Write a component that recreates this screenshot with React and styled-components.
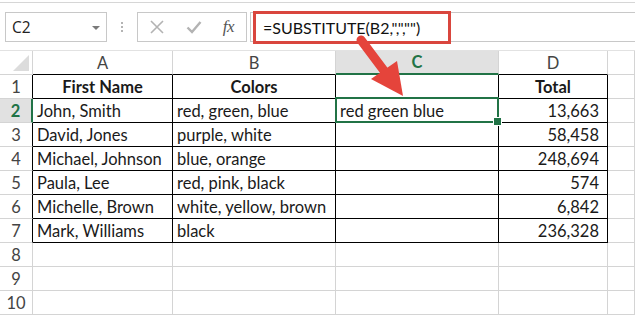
import React from "react";
import styled, { createGlobalStyle, css } from "styled-components";

const GREEN = "#217346";
const GRID = "#d4d4d4";
const DARK = "#1a1a1a";

const Global = createGlobalStyle`
  html, body { margin: 0; padding: 0; background: #fff; }
  body { font-family: Lato, "Open Sans", sans-serif; }
  * { box-sizing: border-box; }
`;

const Page = styled.div`
  position: relative;
  width: 635px;
  height: 316px;
  overflow: hidden;
  padding-top: 2px;
  background: #fff;
`;

const TopRule = styled.div`
  height: 1px;
  background: #d6d6d6;
`;

const FormulaBar = styled.div`
  position: relative;
  display: flex;
  align-items: flex-start;
  height: 47px;
  padding: 9px 0 0 5px;
`;

const NameBox = styled.div`
  display: flex;
  align-items: center;
  justify-content: space-between;
  width: 102px;
  height: 30px;
  border: 1px solid #c8c8c8;
  padding: 0 6px 0 6px;
  font-family: "Open Sans", sans-serif;
  font-size: 15.5px;
  color: #222;
`;

const Caret = styled.span`
  width: 0;
  height: 0;
  border-left: 4px solid transparent;
  border-right: 4px solid transparent;
  border-top: 4px solid #7a7a7a;
  margin-top: 1px;
`;

const Grip = styled.div`
  display: flex;
  flex-direction: column;
  gap: 2px;
  width: 30px;
  height: 30px;
  align-items: center;
  justify-content: center;
`;

const Dot = styled.span`
  width: 2px;
  height: 2px;
  background: #b4b4b4;
`;

const FnButtons = styled.div`
  display: flex;
  align-items: center;
  justify-content: space-between;
  width: 110px;
  height: 30px;
  border: 1px solid #c8c8c8;
  padding: 0 12px 0 11px;
`;

const Fx = styled.span`
  font-family: "Liberation Serif", "DejaVu Serif", serif;
  font-style: italic;
  font-size: 17px;
  color: #555;
  letter-spacing: -0.5px;
`;

const FormulaInput = styled.div`
  flex: 1;
  height: 30px;
  margin-left: 3px;
  border-top: 1px solid #c8c8c8;
  border-bottom: 1px solid #c8c8c8;
  border-left: 1px solid #c8c8c8;
  display: flex;
  align-items: center;
  padding-left: 12px;
  font-family: Lato, sans-serif;
  font-size: 16px;
  color: #111;
`;

const Highlight = styled.div`
  position: absolute;
  left: 253px;
  top: 8px;
  width: 198px;
  height: 33px;
  border: 3px solid #d9463e;
  pointer-events: none;
`;

const Sheet = styled.div`
  display: grid;
  grid-template-columns: 33px 140px 163px 163px 109px 1fr;
  grid-template-rows: 24px repeat(10, 24px);
  border-top: 1px solid #e2e2e2;
  font-family: Lato, "Open Sans", sans-serif;
  font-size: 16.5px;
`;

const Cell = styled.div`
  position: relative;
  display: flex;
  align-items: center;
  border-right: 1px solid ${(p) => p.$right || GRID};
  border-bottom: 1px solid ${(p) => p.$bottom || GRID};
  padding: 0 4px;
  color: ${DARK};
  white-space: nowrap;
  overflow: visible;
  justify-content: ${(p) =>
    p.$align === "right" ? "flex-end" : p.$align === "center" ? "center" : "flex-start"};
  ${(p) => p.$align === "right" && css`padding-right: 8px;`}
  ${(p) => p.$bold && css`font-weight: 700;`}
`;

const ColHead = styled.div`
  display: flex;
  align-items: center;
  justify-content: center;
  border-right: 1px solid ${GRID};
  border-bottom: ${(p) => (p.$active ? `2px solid ${GREEN}` : `1px solid ${p.$bottom || GRID}`)};
  background: ${(p) => (p.$active ? "#e1e1e1" : "#fff")};
  color: ${(p) => (p.$active ? GREEN : "#444")};
  font-weight: ${(p) => (p.$active ? 700 : 400)};
  font-size: 16.5px;
`;

const Corner = styled.div`
  position: relative;
  border-right: 1px solid ${GRID};
  border-bottom: 1px solid ${GRID};
  display: flex;
  align-items: flex-end;
  justify-content: flex-end;
  padding: 0 3px 3px 0;
`;

const RowHead = styled.div`
  display: flex;
  align-items: center;
  justify-content: center;
  border-right: ${(p) =>
    p.$active ? `2px solid ${GREEN}` : `1px solid ${p.$right || GRID}`};
  border-bottom: 1px solid ${GRID};
  background: ${(p) => (p.$active ? "#e1e1e1" : "#fff")};
  color: ${(p) => (p.$active ? GREEN : "#444")};
  font-weight: ${(p) => (p.$active ? 700 : 400)};
  font-size: 16.5px;
`;

const Selected = styled(Cell)`
  &::after {
    content: "";
    position: absolute;
    top: -2px;
    left: -1px;
    right: -1px;
    bottom: -1px;
    border: 2px solid ${GREEN};
    z-index: 2;
  }
  &::before {
    content: "";
    position: absolute;
    right: -4px;
    bottom: -4px;
    width: 7px;
    height: 7px;
    background: ${GREEN};
    border: 1px solid #fff;
    z-index: 3;
  }
`;

const ArrowLayer = styled.svg`
  position: absolute;
  left: 0;
  top: 0;
  pointer-events: none;
  z-index: 5;
`;

const rows = [
  ["First Name", "Colors", "", "Total"],
  ["John, Smith", "red, green, blue", "red green blue", "13,663"],
  ["David, Jones", "purple, white", "", "58,458"],
  ["Michael, Johnson", "blue, orange", "", "248,694"],
  ["Paula, Lee", "red, pink, black", "", "574"],
  ["Michelle, Brown", "white, yellow, brown", "", "6,842"],
  ["Mark, Williams", "black", "", "236,328"],
];

export default function App() {
  const body = [];
  for (let r = 1; r <= 10; r++) {
    const data = rows[r - 1];
    const inTable = !!data;
    body.push(
      <RowHead key={`h${r}`} $active={r === 2} $right={inTable ? "#000" : undefined}>
        {r}
      </RowHead>
    );
    for (let c = 0; c < 4; c++) {
      const text = data ? data[c] : "";
      const props = {
        $right: inTable ? "#000" : undefined,
        $bottom: inTable ? "#000" : undefined,
        $align: r === 1 ? "center" : c === 3 ? "right" : "left",
        $bold: r === 1,
      };
      if (r === 2 && c === 2) {
        body.push(<Selected key={`c${r}-${c}`} {...props}>{text}</Selected>);
      } else {
        body.push(<Cell key={`c${r}-${c}`} {...props}>{text}</Cell>);
      }
    }
    body.push(<Cell key={`e${r}`} />);
  }

  return (
    <>
      <Global />
      <Page>
        <TopRule />
        <FormulaBar>
          <NameBox>
            <span>C2</span>
            <Caret />
          </NameBox>
          <Grip>
            <Dot />
            <Dot />
            <Dot />
          </Grip>
          <FnButtons>
            <svg width="16" height="16" viewBox="0 0 16 16">
              <path d="M2 2 L14 14 M14 2 L2 14" stroke="#b3b3b3" strokeWidth="1.6" fill="none" />
            </svg>
            <svg width="16" height="16" viewBox="0 0 16 16">
              <path d="M1.5 8.5 L6 13 L14.5 3" stroke="#b3b3b3" strokeWidth="2.4" fill="none" />
            </svg>
            <Fx>fx</Fx>
          </FnButtons>
          <FormulaInput>=SUBSTITUTE(B2,",","")</FormulaInput>
          <Highlight />
        </FormulaBar>
        <Sheet>
          <Corner>
            <svg width="16" height="16" viewBox="0 0 16 16">
              <polygon points="16,0 16,16 0,16" fill="#dcdcdc" />
            </svg>
          </Corner>
          <ColHead $bottom="#000">A</ColHead>
          <ColHead $bottom="#000">B</ColHead>
          <ColHead $active>C</ColHead>
          <ColHead $bottom="#000">D</ColHead>
          <ColHead />
          {body}
        </Sheet>
        <ArrowLayer width="635" height="316" viewBox="0 0 635 316">
          <line x1="361" y1="40" x2="385" y2="72" stroke="#e5443b" strokeWidth="9" strokeLinecap="round" />
          <polygon points="371,79 397,61 403,96" fill="#e5443b" />
        </ArrowLayer>
      </Page>
    </>
  );
}
